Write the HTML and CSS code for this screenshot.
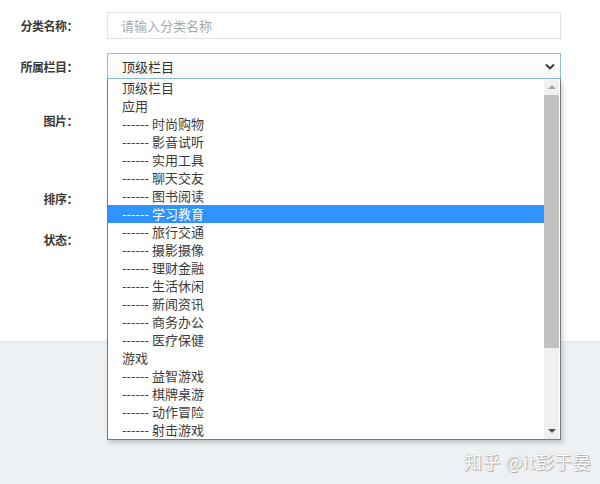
FILE: index.html
```html
<!DOCTYPE html>
<html lang="zh-CN">
<head>
    <meta charset="UTF-8">
    <title>添加分类</title>
    <link rel="stylesheet" href="styles.css">
</head>
<body>
    <div class="panel">
        <div class="form-row row-name">
            <label class="form-label">分类名称：</label>
            <div class="input-box placeholder">请输入分类名称</div>
        </div>
        <div class="form-row row-parent">
            <label class="form-label">所属栏目：</label>
            <div class="select-box">
                <span>顶级栏目</span>
                <svg class="chevron" width="10" height="7" viewBox="0 0 10 7"><path d="M1 1.5 L5 5.5 L9 1.5" fill="none" stroke="#333" stroke-width="1.8"/></svg>
            </div>
            <div class="dropdown">
                <ul class="options">
                    <li>顶级栏目</li>
                    <li>应用</li>
                    <li>------ 时尚购物</li>
                    <li>------ 影音试听</li>
                    <li>------ 实用工具</li>
                    <li>------ 聊天交友</li>
                    <li>------ 图书阅读</li>
                    <li class="active">------ 学习教育</li>
                    <li>------ 旅行交通</li>
                    <li>------ 摄影摄像</li>
                    <li>------ 理财金融</li>
                    <li>------ 生活休闲</li>
                    <li>------ 新闻资讯</li>
                    <li>------ 商务办公</li>
                    <li>------ 医疗保健</li>
                    <li>游戏</li>
                    <li>------ 益智游戏</li>
                    <li>------ 棋牌桌游</li>
                    <li>------ 动作冒险</li>
                    <li>------ 射击游戏</li>
                </ul>
                <div class="scrollbar">
                    <div class="arrow up"></div>
                    <div class="track"><div class="thumb"></div></div>
                    <div class="arrow down"></div>
                </div>
            </div>
        </div>
        <div class="form-row row-pic">
            <label class="form-label">图片：</label>
        </div>
        <div class="form-row row-sort">
            <label class="form-label">排序：</label>
        </div>
        <div class="form-row row-status">
            <label class="form-label">状态：</label>
        </div>
    </div>
    <div class="footer"></div>
    <div class="watermark">知乎 @it彭于晏</div>
</body>
</html>
```

FILE: styles.css
```css
body {
    margin: 0;
    font-family: "Noto Sans CJK SC", "Liberation Sans", sans-serif;
    font-size: 13px;
    color: #333;
    background: #eef1f3;
    height: 484px;
    overflow: hidden;
    position: relative;
}
.panel {
    background: #fff;
    height: 342px;
    border-bottom: 1px solid #e0e4e6;
    box-sizing: border-box;
    padding-top: 12px;
}
.form-row {
    display: flex;
    align-items: center;
    position: relative;
}
.form-label {
    width: 78px;
    text-align: right;
    font-size: 12px;
    font-weight: bold;
    color: #3a3a3a;
    flex-shrink: 0;
    margin-right: 29px;
    letter-spacing: -0.5px;
}
.row-name {
    height: 27px;
}
.row-parent {
    height: 26px;
    margin-top: 14px;
}
.row-pic {
    height: 20px;
    margin-top: 31px;
}
.row-sort {
    height: 20px;
    margin-top: 58px;
}
.row-status {
    height: 20px;
    margin-top: 21px;
}
.input-box {
    width: 454px;
    height: 27px;
    box-sizing: border-box;
    border: 1px solid #e1e1e1;
    padding-left: 13px;
    line-height: 25px;
}
.placeholder {
    color: #a9a9a9;
}
.select-box {
    width: 454px;
    height: 26px;
    box-sizing: border-box;
    border: 1px solid #8ebfcc;
    background: linear-gradient(#fff, #f7f7f7);
    padding-left: 14px;
    display: flex;
    align-items: center;
    justify-content: space-between;
    padding-right: 5px;
}
.dropdown {
    position: absolute;
    left: 107px;
    top: 26px;
    width: 454px;
    height: 361px;
    box-sizing: border-box;
    background: #fff;
    border: 1px solid #7a7a7a;
    border-top: none;
    box-shadow: 2px 3px 4px rgba(0, 0, 0, 0.18);
    display: flex;
    font-weight: normal;
    color: #3c3c3c;
}
.options {
    list-style: none;
    margin: 0;
    padding: 0;
    flex: 1;
}
.options li {
    height: 18px;
    line-height: 18px;
    padding-left: 14px;
    white-space: nowrap;
}
.options li.active {
    background: #3093fe;
    color: #fff;
}
.scrollbar {
    width: 15px;
    background: #f0f0f0;
    display: flex;
    flex-direction: column;
    margin-right: 1px;
}
.arrow {
    height: 16px;
    position: relative;
}
.arrow.up::after,
.arrow.down::after {
    content: "";
    position: absolute;
    left: 4px;
    border-left: 4px solid transparent;
    border-right: 4px solid transparent;
}
.arrow.up::after {
    top: 6px;
    border-bottom: 4px solid #a3a3a3;
}
.arrow.down::after {
    top: 6px;
    border-top: 4px solid #505050;
}
.track {
    flex: 1;
}
.thumb {
    height: 253px;
    background: #c1c1c1;
}
.watermark {
    position: absolute;
    left: 464px;
    top: 448px;
    font-size: 18px;
    color: #fff;
    text-shadow: 0 0 1px #999, 1px 1px 1px #aaa;
    letter-spacing: 0.5px;
}
```
